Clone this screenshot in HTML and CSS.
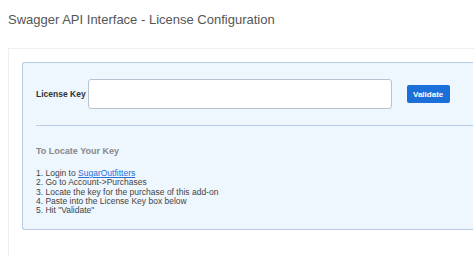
FILE: index.html
```html
<!DOCTYPE html>
<html lang="en">
<head>
  <meta charset="UTF-8">
  <title>Swagger API Interface - License Configuration</title>
  <link rel="stylesheet" href="styles.css">
</head>
<body>

<h1 class="page-title">Swagger API Interface - License Configuration</h1>

<div class="panel">
  <div class="license-box">
    <form class="license-row">
      <label for="licenseKey">License Key</label>
      <input type="text" id="licenseKey" name="licenseKey">
      <button type="button" class="validate-btn">Validate</button>
    </form>

    <div class="help">
      <h3>To Locate Your Key</h3>
      <p>
        1. Login to <a href="#">SugarOutfitters</a><br>
        2. Go to Account-&gt;Purchases<br>
        3. Locate the key for the purchase of this add-on<br>
        4. Paste into the License Key box below<br>
        5. Hit "Validate"
      </p>
    </div>
  </div>
</div>

</body>
</html>
```

FILE: styles.css
```css
* {
  box-sizing: border-box;
}

body {
  margin: 0;
  font-family: "Liberation Sans", Arial, sans-serif;
  background-color: #fff;
  overflow: hidden;
}

.page-title {
  margin: 0;
  padding: 12px 8px 0;
  font-size: 13px;
  font-weight: normal;
  color: #555;
  height: 48px;
}

.panel {
  margin-left: 8px;
  width: 466px;
  height: 208px;
  border-left: 1px solid #f0eef4;
  border-top: 1px solid #f0eef4;
  padding: 13px 1px 0 13px;
}

.license-box {
  background: #eef6fe;
  border: 1px solid #b9cde9;
  border-right: none;
  border-radius: 3px 0 0 3px;
  height: 168px;
  padding: 0 0 0 13px;
}

.license-row {
  display: flex;
  align-items: center;
  height: 63px;
  border-bottom: 1px solid #b9cde9;
}

.license-row label {
  font-size: 8.5px;
  font-weight: bold;
  color: #333;
  margin-right: 2px;
}

.license-row input {
  width: 304px;
  height: 30px;
  border: 1px solid #b8c2d2;
  border-radius: 3px;
  background: #fff;
  margin-right: 15px;
}

.validate-btn {
  background-color: #1a6fd8;
  color: white;
  border: none;
  border-radius: 2px;
  font-family: inherit;
  font-size: 8px;
  font-weight: bold;
  width: 43px;
  height: 18px;
  padding: 0;
}

.help h3 {
  margin: 20px 0 13px;
  font-size: 9px;
  color: #888;
}

.help p {
  margin: 0;
  font-size: 8.5px;
  line-height: 9.3px;
  color: #444;
}

.help a {
  color: #2a6edb;
}
```
